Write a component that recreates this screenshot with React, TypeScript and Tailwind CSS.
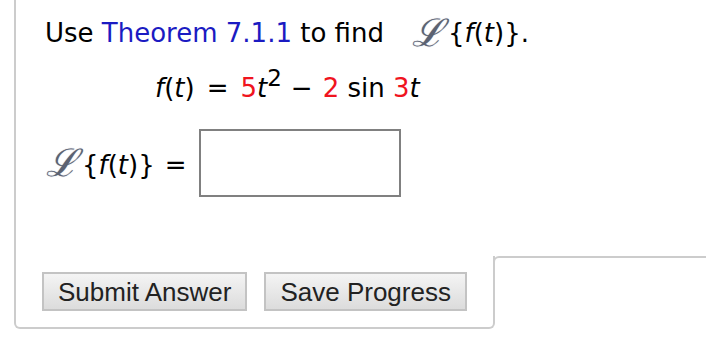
import React from 'react'

const Script = () => (
    <span className="text-[38px] leading-none text-[#5b6272] [font-family:'DejaVu_Serif',serif] italic [text-shadow:0_0_1px_#8a93a6]">ℒ</span>
)

const Btn = ({ label }: { label: string }) => (
    <button className="h-[39px] px-[14px] border-2 border-[#c3c3c3] bg-gradient-to-b from-[#f4f4f4] to-[#dcdcdc] text-[26px] leading-none text-[#222] [font-family:'Liberation_Sans',Arial,sans-serif]">
        {label}
    </button>
)

export default function App() {
    return (
        <div className="w-[706px] h-[340px] bg-white [font-family:'DejaVu_Sans',Verdana,sans-serif] text-[26px] text-black">
            <div className="ml-[14px] w-[481px] h-[256px] border-l-2 border-[#cccccc] pt-[18px]">
                <div className="pl-[29px] h-[30px] leading-[30px] flex items-center whitespace-nowrap">
                    <span>Use <span className="text-[#1b1bc2]">Theorem 7.1.1</span> to find</span>
                    <span className="ml-[28px] flex items-center"><Script /><span className="ml-[4px]">{'{'}<i>f</i>(<i>t</i>){'}'}.</span></span>
                </div>
                <p className="pl-[139px] mt-[25px] leading-[30px] whitespace-nowrap">
                    <i>f</i>(<i>t</i>)<span className="mx-[12px]">=</span><span className="text-[#f0141e]">5</span><i>t</i><sup className="text-[23px] top-[-0.5em]">2</sup><span className="ml-[9px] mr-[10px]">−</span><span className="text-[#f0141e]">2</span> sin <span className="text-[#f0141e]">3</span><i>t</i>
                </p>
                <div className="pl-[30px] mt-[26px] flex items-center whitespace-nowrap">
                    <Script />
                    <span className="ml-[4px] mt-[4px]">{'{'}<i>f</i>(<i>t</i>){'}'}<span className="ml-[10px]">=</span></span>
                    <input className="ml-[12px] w-[202px] h-[68px] border-2 border-[#808080] bg-white outline-none" />
                </div>
            </div>
            <div className="flex items-start">
                <div className="ml-[14px] w-[481px] h-[73px] border-l-2 border-r-2 border-b-2 border-[#cccccc] rounded-b-[6px] pl-[26px] pt-[16px] flex gap-[17px]">
                    <Btn label="Submit Answer" />
                    <Btn label="Save Progress" />
                </div>
                <div className="flex-1 -ml-[2px] h-[20px] border-t-2 border-l-2 border-[#cccccc] rounded-tl-[6px]" />
            </div>
        </div>
    )
}
